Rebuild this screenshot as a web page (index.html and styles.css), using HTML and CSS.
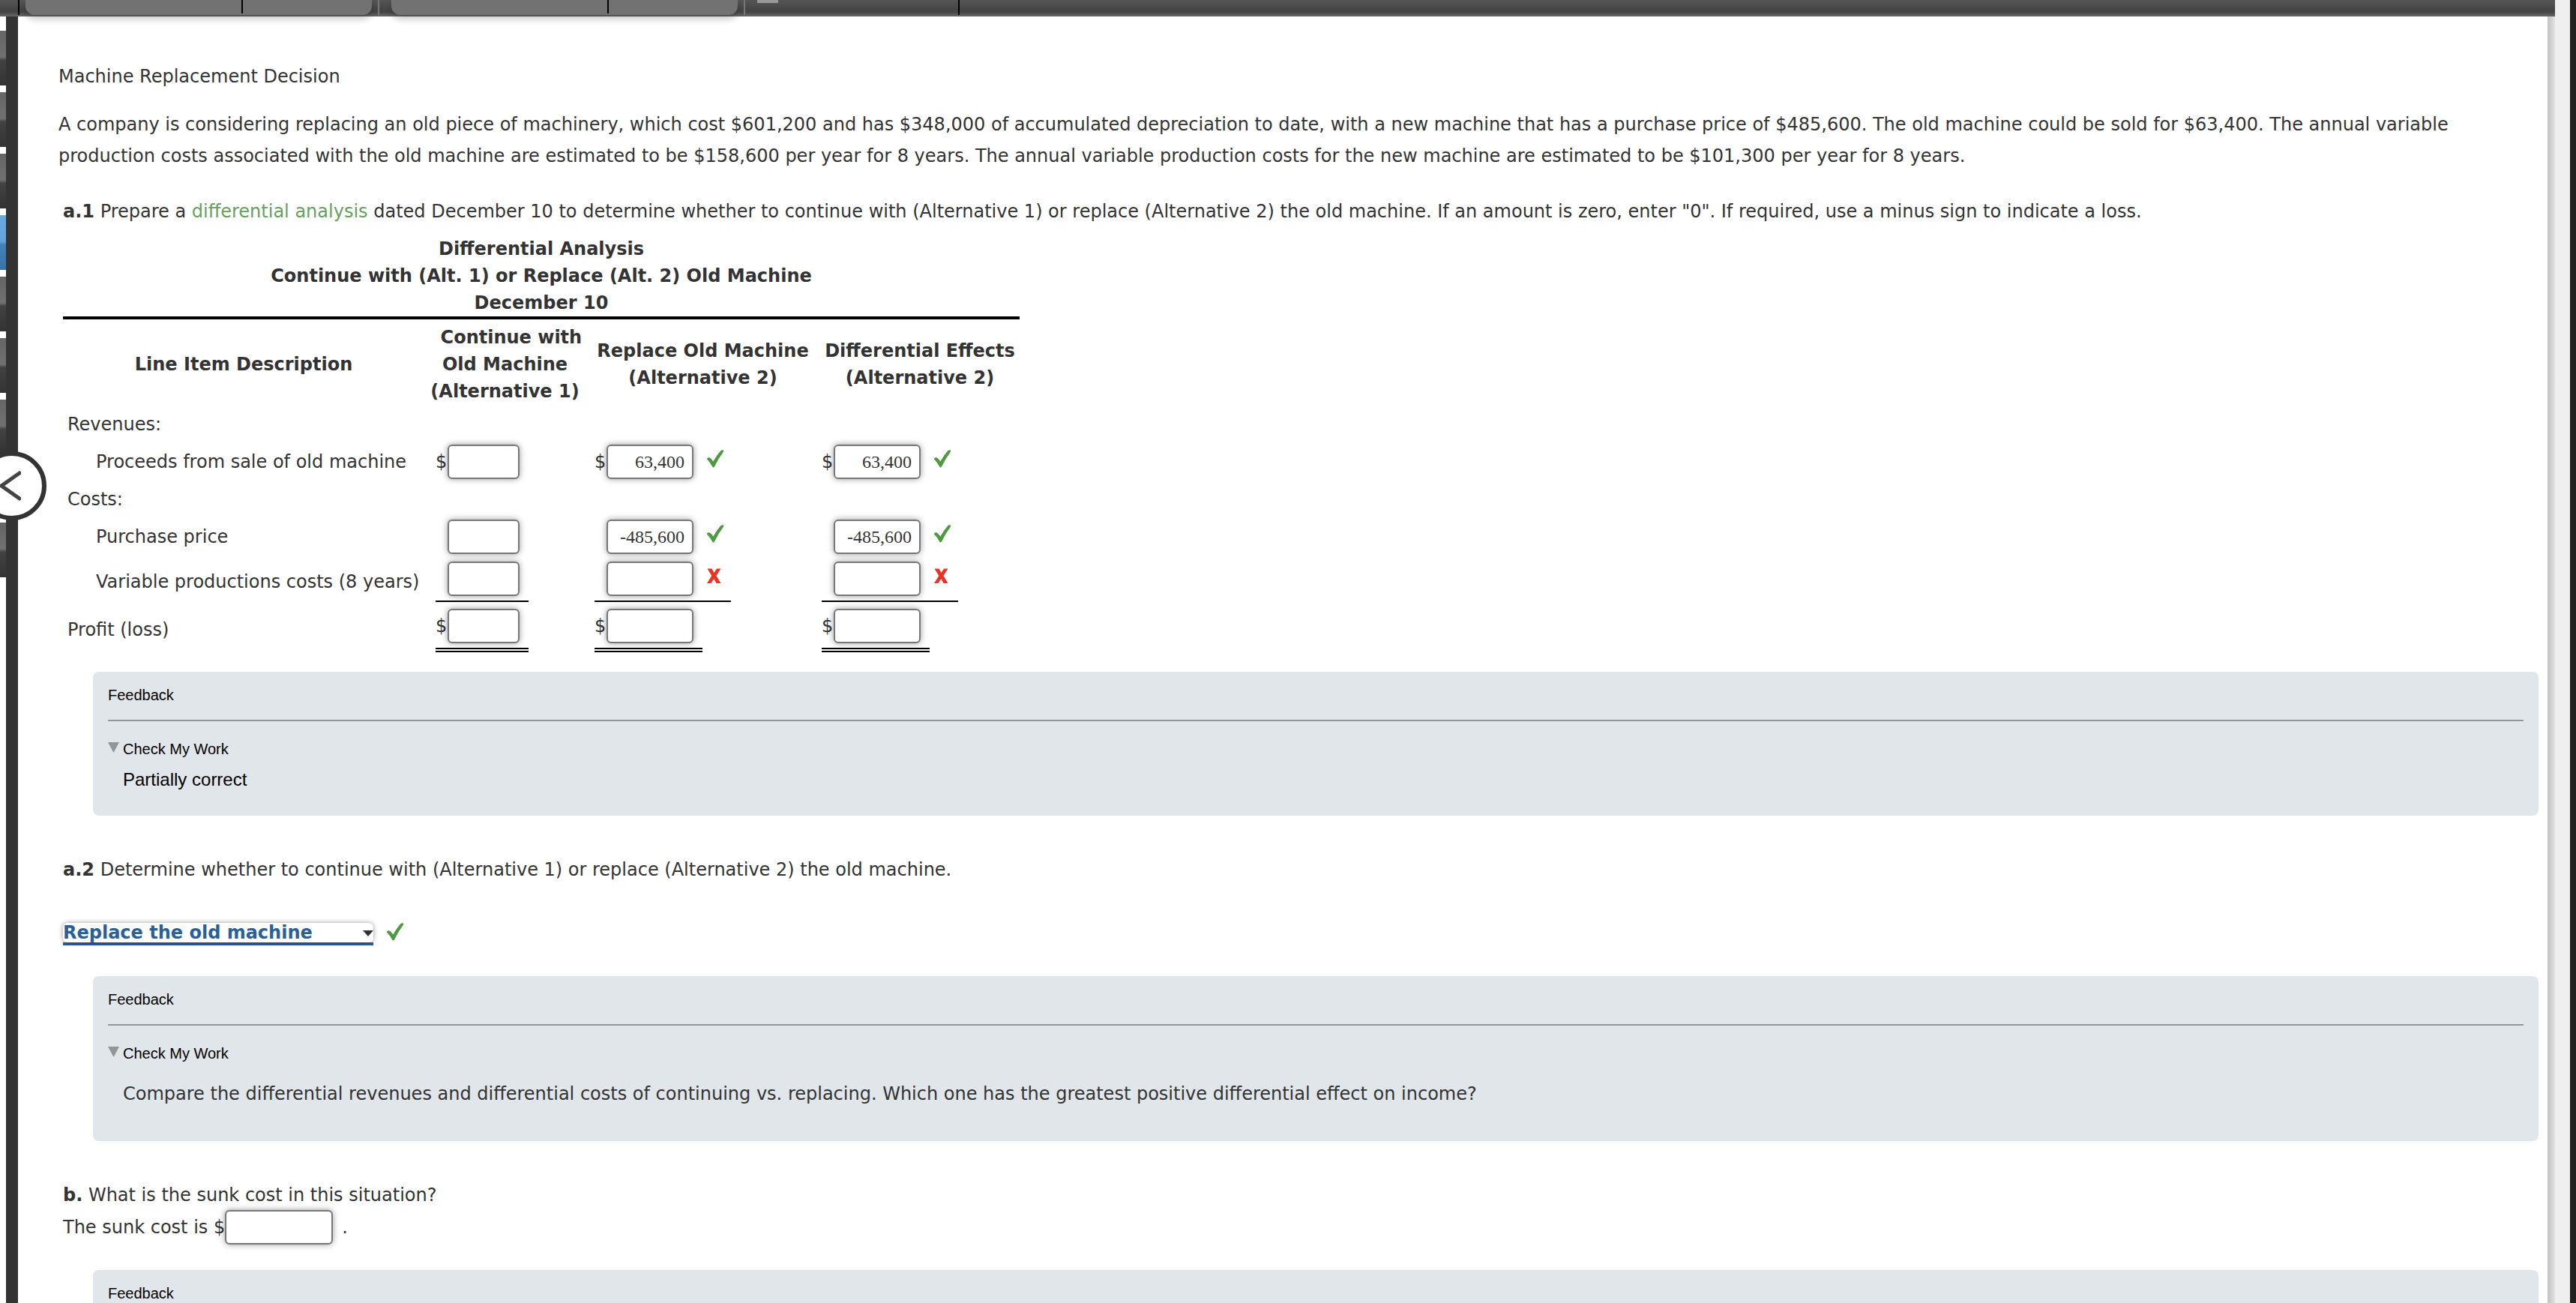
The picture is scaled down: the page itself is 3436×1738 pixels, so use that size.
FILE: index.html
```html
<!DOCTYPE html>
<html lang="en">
<head>
<meta charset="utf-8">
<title>Machine Replacement Decision</title>
<link rel="stylesheet" href="styles.css">
</head>
<body>
<svg class="sprite" aria-hidden="true">
  <symbol id="check" viewBox="0 0 22 24"><path d="M0 11.500 Q2.500 9 5 11.500 L8.300 15.500 Q12.500 8 18 1.500 Q20.500 -.5 22 .5 Q22.400 2 21 4 Q15 12 10.500 21.500 Q9 25 7.200 22.500 Q4 16.500 0 12.500Z"/></symbol>
  <symbol id="cross" viewBox="0 0 22 24"><path d="M.5 2.500H6.500L9.500 8 13 2.500H18.500L12.400 12 18.500 22H12.500L9.300 16 5.500 22H0L6.300 12Z"/></symbol>
</svg>
<div class="app">
  <div class="frame">
    <header class="topbar">
      <span class="topbar-start"></span>
      <span class="tab"><span class="tab-main"></span></span>
      <span class="divider"></span>
      <span class="tab"><span class="tab-main"></span></span>
      <span class="divider"></span>
      <span class="tab-next"><span class="tab-glyph"></span></span>
    </header>
    <div class="body">
      <nav class="rail" aria-label="Questions">
        <span class="item"></span><span class="item"></span><span class="item"></span><span class="item current"></span><span class="item"></span><span class="item"></span><span class="item"></span><span class="item"></span><span class="item"></span>
      </nav>
      <div class="rail-edge">
        <button class="collapse" aria-label="Collapse question list"><svg viewBox="0 0 30 40"><path d="M28 3 L4 20 L28 37"/></svg></button>
      </div>
      <main class="page">
        <h1>Machine Replacement Decision</h1>
        <p class="intro">A company is considering replacing an old piece of machinery, which cost $601,200 and has $348,000 of accumulated depreciation to date, with a new machine that has a purchase price of $485,600. The old machine could be sold for $63,400. The annual variable production costs associated with the old machine are estimated to be $158,600 per year for 8 years. The annual variable production costs for the new machine are estimated to be $101,300 per year for 8 years.</p>
        <section class="part">
          <p><b>a.1</b> Prepare a <a href="#term">differential analysis</a> dated December 10 to determine whether to continue with (Alternative 1) or replace (Alternative 2) the old machine. If an amount is zero, enter "0". If required, use a minus sign to indicate a loss.</p>
          <table class="analysis">
            <caption>Differential Analysis<br>Continue with (Alt. 1) or Replace (Alt. 2) Old Machine<br>December 10</caption>
            <colgroup><col class="c-desc"><col class="c-alt1"><col class="c-alt2"><col class="c-diff"></colgroup>
            <thead>
              <tr><th scope="col">Line Item Description</th><th scope="col">&nbsp;&nbsp;Continue with<br>Old Machine<br>(Alternative 1)</th><th scope="col">Replace Old Machine<br>(Alternative 2)</th><th scope="col">Differential Effects<br>(Alternative 2)</th></tr>
            </thead>
            <tbody>
              <tr class="group"><td>Revenues:</td><td></td><td></td><td></td></tr>
              <tr class="line"><td class="sub">Proceeds from sale of old machine</td>
                <td><label class="amount"><span>$</span><input class="narrow" aria-label="Proceeds, alternative 1"></label></td>
                <td><label class="amount"><span>$</span><input value="63,400" aria-label="Proceeds, alternative 2"><svg class="mark ok"><use href="#check"/></svg></label></td>
                <td><label class="amount"><span>$</span><input value="63,400" aria-label="Proceeds, differential"><svg class="mark ok"><use href="#check"/></svg></label></td></tr>
              <tr class="group"><td>Costs:</td><td></td><td></td><td></td></tr>
              <tr class="line"><td class="sub">Purchase price</td>
                <td><label class="amount"><span></span><input class="narrow" aria-label="Purchase price, alternative 1"></label></td>
                <td><label class="amount"><span></span><input value="-485,600" aria-label="Purchase price, alternative 2"><svg class="mark ok"><use href="#check"/></svg></label></td>
                <td><label class="amount"><span></span><input value="-485,600" aria-label="Purchase price, differential"><svg class="mark ok"><use href="#check"/></svg></label></td></tr>
              <tr class="line"><td class="sub">Variable productions costs (8 years)</td>
                <td><label class="amount subtotal"><span></span><input class="narrow" aria-label="Variable costs, alternative 1"></label></td>
                <td><label class="amount subtotal"><span></span><input aria-label="Variable costs, alternative 2"><svg class="mark bad"><use href="#cross"/></svg></label></td>
                <td><label class="amount subtotal"><span></span><input aria-label="Variable costs, differential"><svg class="mark bad"><use href="#cross"/></svg></label></td></tr>
              <tr class="line result"><td>Profit (loss)</td>
                <td><label class="amount total"><span>$</span><input class="narrow" aria-label="Profit, alternative 1"></label></td>
                <td><label class="amount total"><span>$</span><input aria-label="Profit, alternative 2"></label></td>
                <td><label class="amount total"><span>$</span><input aria-label="Profit, differential"></label></td></tr>
            </tbody>
          </table>
          <div class="feedback">
            <h2>Feedback</h2>
            <h3>Check My Work</h3>
            <p class="status">Partially correct</p>
          </div>
        </section>
        <section class="part">
          <p class="ask"><b>a.2</b> Determine whether to continue with (Alternative 1) or replace (Alternative 2) the old machine.</p>
          <div class="choice">
            <span class="select"><select aria-label="Decision"><option>Replace the old machine</option></select></span>
            <svg class="mark ok"><use href="#check"/></svg>
          </div>
          <div class="feedback">
            <h2>Feedback</h2>
            <h3>Check My Work</h3>
            <p class="hint">Compare the differential revenues and differential costs of continuing vs. replacing. Which one has the greatest positive differential effect on income?</p>
          </div>
        </section>
        <section class="part">
          <p class="ask"><b>b.</b> What is the sunk cost in this situation?</p>
          <div class="sunk"><label for="sunk">The sunk cost is $</label><input id="sunk"><span>.</span></div>
          <div class="feedback"><h2>Feedback</h2></div>
        </section>
      </main>
      <div class="page-shadow"></div>
    </div>
  </div>
  <div class="gutter"></div>
</div>
</body>
</html>
```
FILE: styles.css
```css
* { box-sizing: border-box; }
body {
  margin: 0;
  overflow: hidden;
  background: #fff;
  color: #333;
  font: 24px/36px "DejaVu Sans", Verdana, sans-serif;
}
h1, h2, h3, p { margin: 0; font-size: 24px; font-weight: normal; }
.sprite { display: none; }
.app { display: flex; height: 100vh; }
.frame { flex: 1; min-width: 0; display: flex; flex-direction: column; }
.gutter { width: 28px; background: #efefef; border-right: 8px solid #202020; }

/* top tab bar */
.topbar {
  display: flex;
  flex: none;
  height: 22px;
  background: linear-gradient(#555, #444 65%, #484848 75%, #6a6a6a);
}
.topbar-start { width: 26px; height: 20px; margin-right: 8px; border-right: 2px solid #000; }
.tab {
  width: 462px;
  height: 20px;
  border-radius: 0 0 12px 12px;
  background: #727272;
  box-shadow: 0 6px 8px rgba(0, 0, 0, .2);
}
.tab-main { display: block; width: 290px; height: 18px; border-right: 2px solid #000; }
.divider { width: 2px; height: 20px; margin: 0 16px 0 8px; background: #777; }
.tab-next { width: 270px; height: 20px; border-right: 2px solid #000; }
.tab-glyph { display: block; width: 28px; height: 4px; background: #999; }

/* left rail */
.body { flex: 1; min-height: 0; display: flex; overflow: hidden; }
.rail {
  display: grid;
  align-content: start;
  grid-auto-rows: 73px;
  gap: 9px;
  width: 8px;
  padding-top: 19px;
}
.item { background: linear-gradient(#666, #707070 48%, #424242 54%, #333); }
.current { background: linear-gradient(#68aade, #62a3da 48%, #4382b8 54%, #3773a8); }
.rail-edge { position: relative; width: 16px; background: #333; }
.collapse {
  position: absolute;
  top: 580px;
  left: -38px;
  width: 92px;
  height: 92px;
  padding: 0;
  border: 6px solid #333;
  border-radius: 50%;
  background: #fff;
}
.collapse svg { display: block; width: 30px; height: 40px; margin-left: 22px; fill: none; stroke: #444; stroke-width: 5; stroke-linecap: round; }
.page-shadow { width: 10px; background: linear-gradient(90deg, #c2c2c2, #e2e2e2); }

/* page */
.page { flex: 1; min-width: 0; padding: 62px 12px 0 54px; }
.intro { margin-top: 25px; line-height: 42px; }
.part { padding-left: 6px; }
.part a { color: #67a05f; text-decoration: none; }
.intro + .part { margin-top: 35px; }

.analysis { width: 1276px; margin-top: 14px; border-collapse: collapse; table-layout: fixed; }
.analysis caption { border-bottom: 4px solid #000; font-weight: bold; }
.c-desc { width: 478px; }
.c-alt1 { width: 219px; }
.c-alt2 { width: 309px; }
.c-diff { width: 270px; }
.analysis th { height: 118px; padding: 2px 0 0 4px; white-space: nowrap; }
.analysis td { padding: 0 0 0 6px; white-space: nowrap; }
.analysis td.sub { padding-left: 44px; }
.analysis td:nth-child(2) { padding-left: 19px; }
.analysis td:nth-child(3) { padding-left: 12px; }
.group td { height: 44px; }
.line td { padding-top: 5px; padding-bottom: 5px; }
.result td { padding-top: 4px; padding-bottom: 2px; }
.line td:first-child { padding-top: 0; padding-bottom: 0; }

.amount { display: flex; align-items: center; width: max-content; }
.amount span { width: 16px; }
input {
  width: 116px;
  height: 46px;
  padding: 0 10px;
  border: 2px solid #777;
  border-radius: 6px;
  background: #fff;
  box-shadow: 0 0 8px rgba(0, 0, 0, .4);
  color: #333;
  font: 24px "Liberation Serif", "Times New Roman", serif;
  text-align: right;
}
.narrow { width: 96px; }
.mark { flex: none; width: 22px; height: 24px; }
.ok { fill: #4f9a41; }
.bad { fill: #ec3323; }
.amount .mark { margin: 0 10px 8px 18px; }
.subtotal, .total { padding-bottom: 6px; border-bottom: 2px solid #000; }
.total { border-bottom: 6px double #000; }
.total input, .subtotal .narrow { margin-right: 12px; }

.feedback {
  height: 192px;
  margin: 24px 0 0 40px;
  padding: 0 20px;
  border-radius: 8px;
  background: #e0e6e9;
  color: #000;
}
.feedback h2, .feedback h3 { font: 20px/24px "Liberation Sans", Arial, sans-serif; }
.feedback h2 { padding: 19px 0 21px; border-bottom: 2px solid #8f9799; }
.feedback h3 { display: flex; margin-top: 25px; }
.feedback h3::before {
  content: "";
  width: 15px;
  height: 14px;
  margin: 3px 5px 0 0;
  background: #8f9799;
  clip-path: polygon(0 0, 100% 0, 50% 100%);
}
.status { margin: 11px 0 0 20px; font: 24px/36px "Liberation Sans", Arial, sans-serif; }
.hint { margin: 24px 0 0 20px; color: #333; }

.ask { margin-top: 54px; }
.choice { display: flex; gap: 18px; margin-top: 53px; }
.choice + .feedback { height: 220px; margin-top: 41px; }
.select { position: relative; display: flex; width: 414px; border-bottom: 4px solid #2b5f97; }
.select::after {
  content: "";
  position: absolute;
  right: 0;
  top: 10px;
  width: 14px;
  height: 8px;
  background: #333;
  clip-path: polygon(0 0, 100% 0, 50% 100%);
}
select {
  appearance: none;
  width: 100%;
  height: 26px;
  padding: 0;
  border: 0;
  border-radius: 6px;
  background: #fff;
  box-shadow: 0 0 6px rgba(0, 0, 0, .4);
  color: #2b5f97;
  font: bold 24px/26px "DejaVu Sans", Verdana, sans-serif;
}
.sunk { display: flex; align-items: center; margin-top: 2px; }
.sunk input { width: 144px; margin-right: 12px; }
.sunk + .feedback { margin-top: 34px; }
```
